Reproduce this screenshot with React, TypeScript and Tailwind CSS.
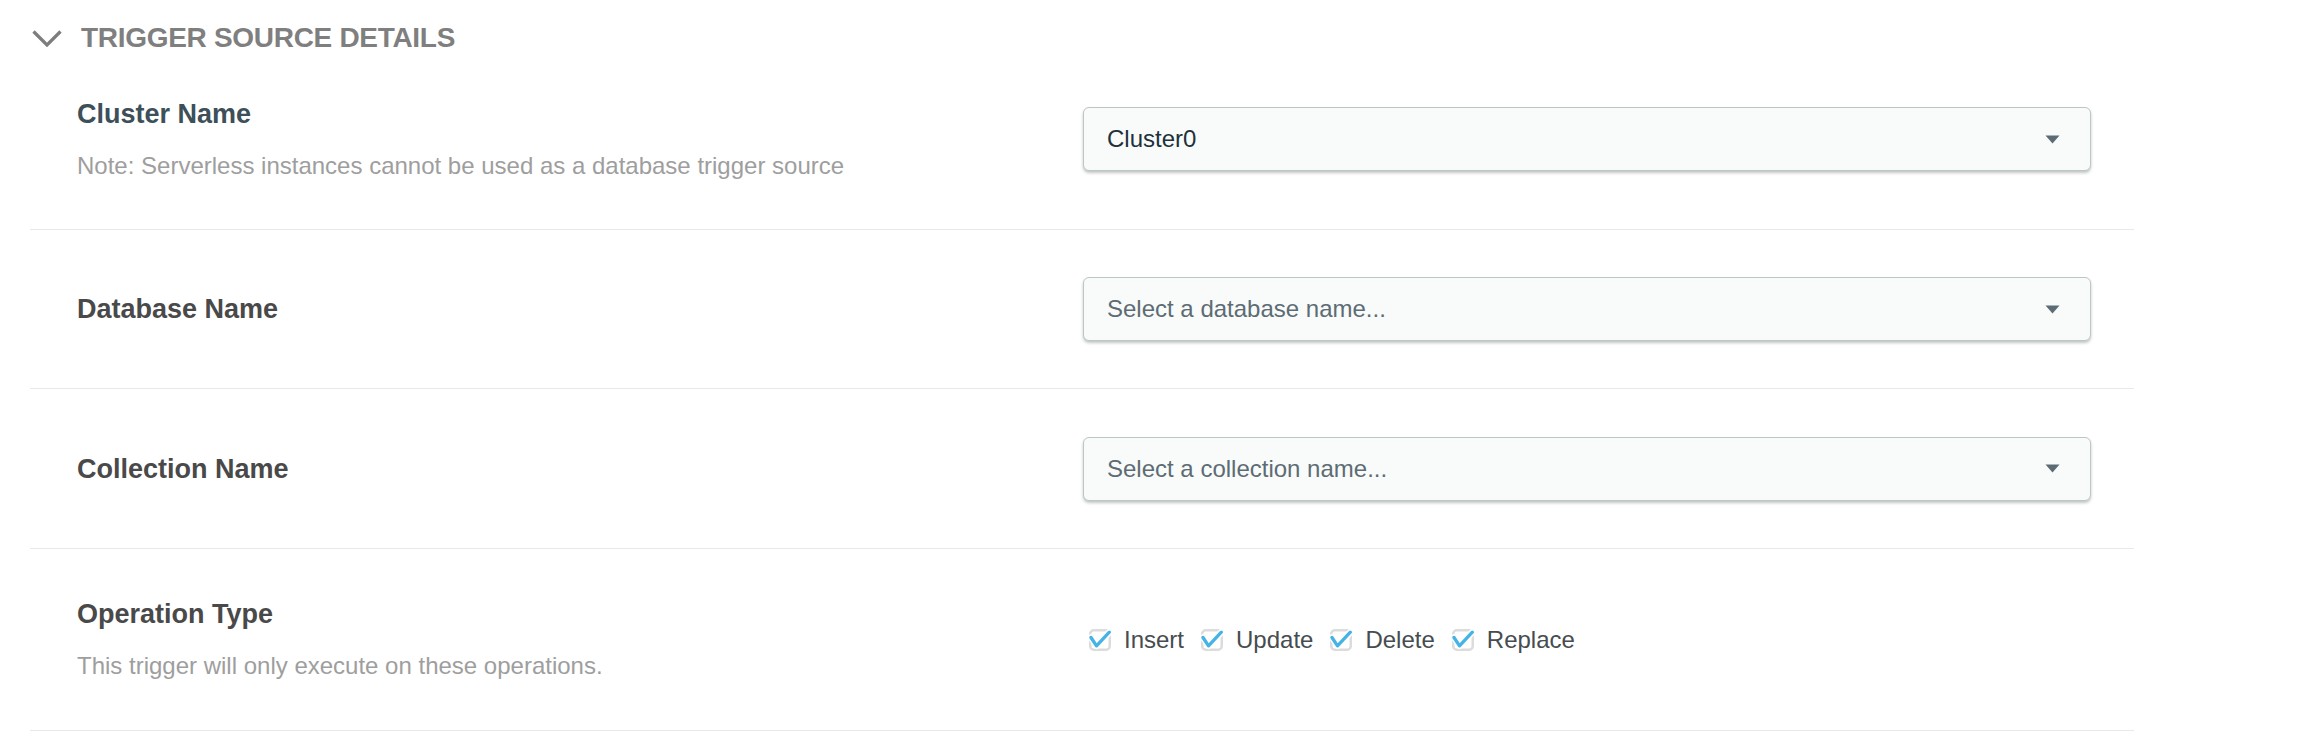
import React from 'react';

type Row = {
  label: string;
  labelColor?: string;
  note?: string;
};

function Caret() {
  return (
    <svg width="15" height="9" viewBox="0 0 15 9" className="shrink-0">
      <path d="M0.5 0.5 L14.5 0.5 L7.5 8.5 Z" fill="#5d6c74" />
    </svg>
  );
}

function Dropdown({ value, placeholder }: { value?: string; placeholder?: string }) {
  return (
    <div className="h-[64px] w-full flex items-center justify-between pl-[23px] pr-[30px] rounded-[6px] border border-[#bcc6c5] bg-[#f9fbfa] shadow-[0_2px_3px_rgba(6,22,33,0.25)]">
      {value ? (
        <span className="text-[24px] leading-[30px] text-[#21313c]">{value}</span>
      ) : (
        <span className="text-[24px] leading-[30px] text-[#5d6c74]">{placeholder}</span>
      )}
      <Caret />
    </div>
  );
}

function CheckIcon() {
  return (
    <svg width="22" height="22" viewBox="0 0 22 22" className="shrink-0">
      <rect x="1.25" y="1.25" width="19.5" height="19.5" rx="3.5" fill="#fff" stroke="#dcdcdc" strokeWidth="2.5" />
      <polyline points="2,8.5 7.5,16.8 20.3,3.2" fill="none" stroke="#fff" strokeWidth="6.5" strokeLinecap="round" strokeLinejoin="round" />
      <polyline points="2,8.5 7.5,16.8 20.3,3.2" fill="none" stroke="#45b3e6" strokeWidth="3.3" strokeLinecap="round" strokeLinejoin="round" />
    </svg>
  );
}

function Label({ row }: { row: Row }) {
  return (
    <div className="w-[1053px] shrink-0 pl-[47px]">
      <div className={`text-[27px] leading-[32px] font-bold ${row.labelColor ?? 'text-[#494949]'}`}>{row.label}</div>
      {row.note && <div className="mt-[21px] text-[24px] leading-[30px] text-[#9e9e9e]">{row.note}</div>}
    </div>
  );
}

const ops = ['Insert', 'Update', 'Delete', 'Replace'];

export default function App() {
  return (
    <div className="min-h-screen bg-white font-['Liberation_Sans',Arial,sans-serif]">
      <div className="w-[2104px] ml-[30px]">
        {/* section header */}
        <div className="flex items-center pt-[22px] pl-[2px] leading-[32px]">
          <svg width="30" height="17" viewBox="0 0 30 17" className="shrink-0">
            <polyline points="1.5,1.5 15,15 28.5,1.5" fill="none" stroke="#7d7d7d" strokeWidth="3.2" />
          </svg>
          <span className="ml-[19px] text-[28px] font-bold tracking-[-0.3px] text-[#7f7f7f]">TRIGGER SOURCE DETAILS</span>
        </div>

        <div className="h-[176px] pb-[5px] flex items-center border-b border-[#e9e9e9]">
          <Label row={{ label: 'Cluster Name', labelColor: 'text-[#3d4f58]', note: 'Note: Serverless instances cannot be used as a database trigger source' }} />
          <div className="flex-1 pr-[43px]">
            <Dropdown value="Cluster0" />
          </div>
        </div>

        <div className="h-[159px] flex items-center border-b border-[#e9e9e9]">
          <Label row={{ label: 'Database Name' }} />
          <div className="flex-1 pr-[43px]">
            <Dropdown placeholder="Select a database name..." />
          </div>
        </div>

        <div className="h-[160px] flex items-center border-b border-[#e9e9e9]">
          <Label row={{ label: 'Collection Name' }} />
          <div className="flex-1 pr-[43px]">
            <Dropdown placeholder="Select a collection name..." />
          </div>
        </div>

        <div className="h-[182px] flex items-center border-b border-[#e9e9e9]">
          <Label row={{ label: 'Operation Type', note: 'This trigger will only execute on these operations.' }} />
          <div className="flex-1 pr-[43px]">
            <div className="ml-[6px] flex items-center">
              {ops.map(op => (
                <label key={op} className="flex items-center mr-[17px]">
                  <CheckIcon />
                  <span className="ml-[13px] text-[24px] leading-[30px] text-[#464c4f]">{op}</span>
                </label>
              ))}
            </div>
          </div>
        </div>
      </div>
    </div>
  );
}
